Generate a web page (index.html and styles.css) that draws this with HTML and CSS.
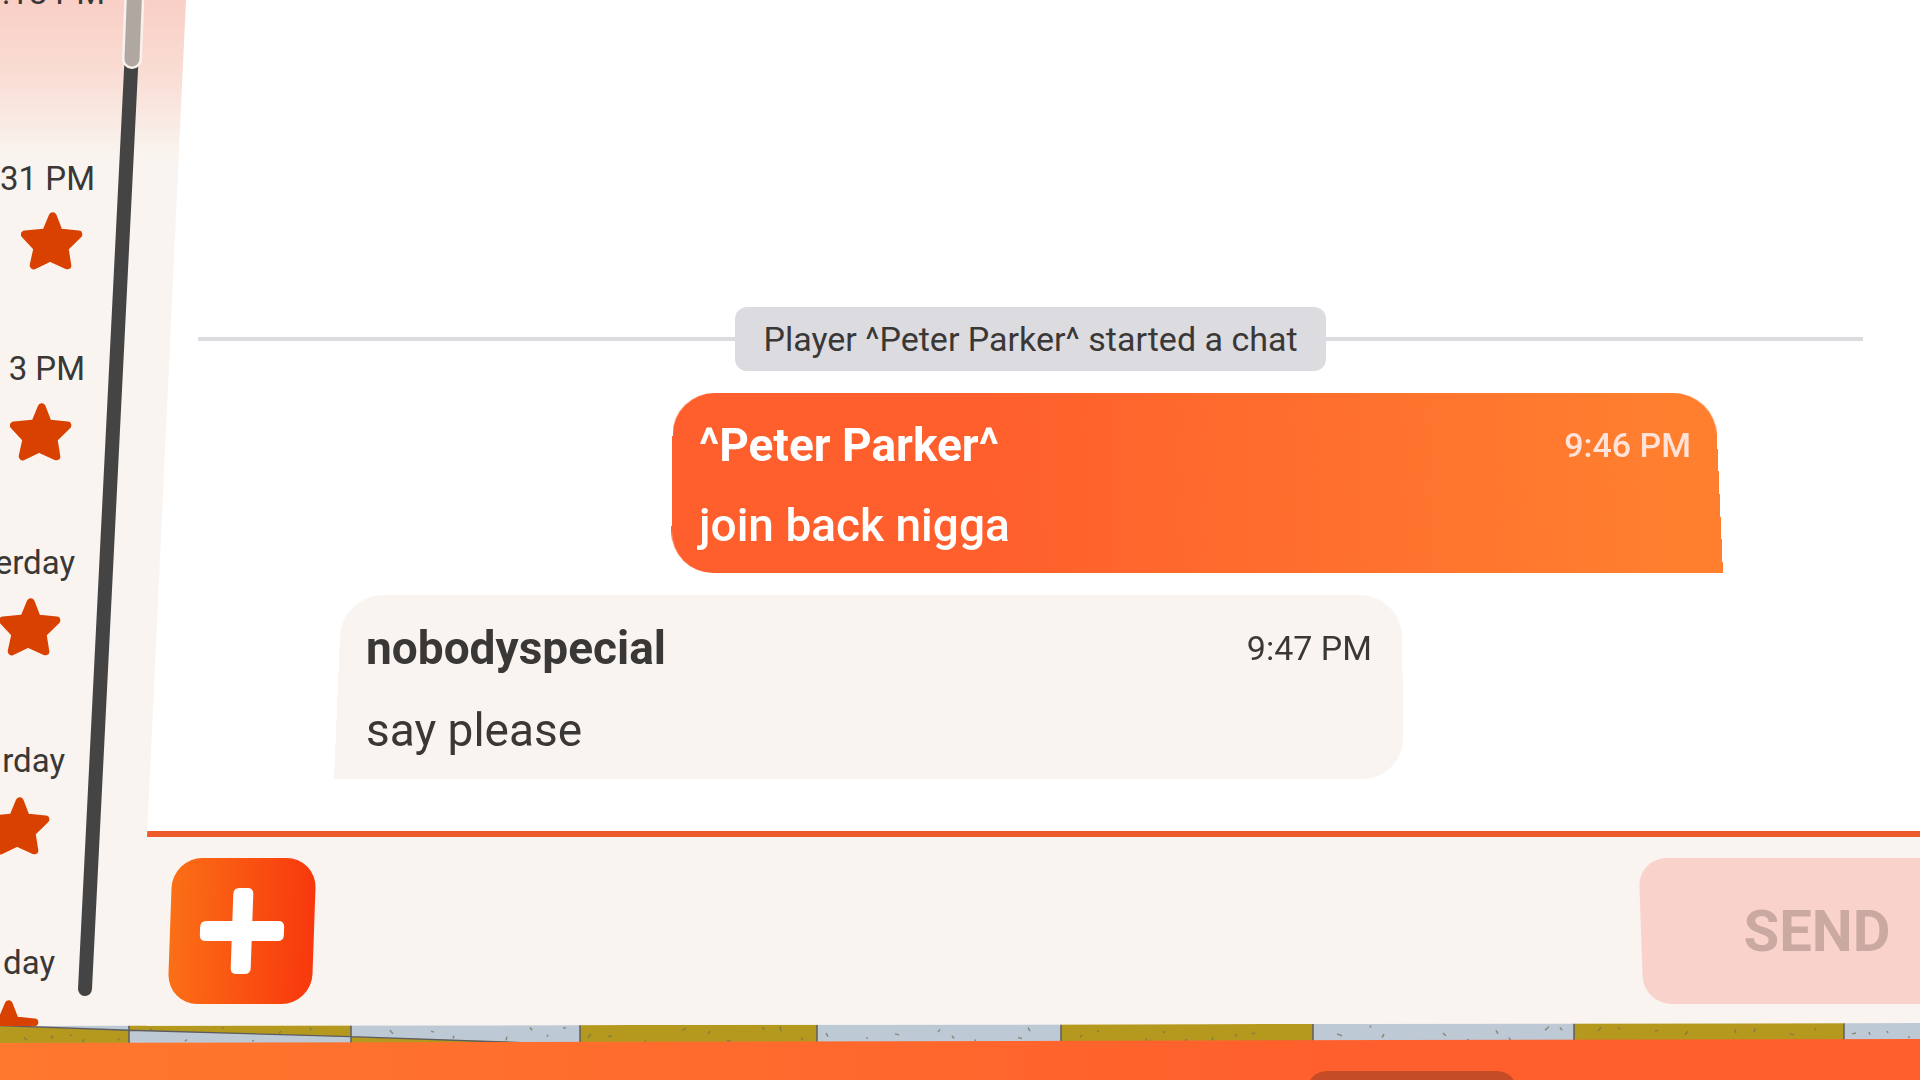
FILE: index.html
```html
<!DOCTYPE html>
<html lang="en">
<head>
    <meta charset="UTF-8">
    <meta name="viewport" content="width=device-width, initial-scale=1.0">
    <title>Chat</title>
    <link rel="stylesheet" href="styles.css">
</head>
<body>

<svg class="defs" aria-hidden="true">
    <symbol id="star" viewBox="0 0 62 58">
        <path d="M31.7 4.3 38 20.5 57.3 22.5 43.5 36 46.3 53.3 29.3 45.5 12.7 53.3 16.5 36 4 22.5 25 20.5Z" fill="#d84100" stroke="#d84100" stroke-width="8" stroke-linejoin="round"/>
    </symbol>
</svg>

<main class="window">
    <!-- chat list -->
    <aside class="sidebar">
        <ul class="chat-list">
            <li style="--i:0"><time>:18 PM</time></li>
            <li style="--i:1"><time>31 PM</time><svg class="star"><use href="#star"/></svg></li>
            <li style="--i:2"><time>3 PM</time><svg class="star"><use href="#star"/></svg></li>
            <li style="--i:3"><time>erday</time><svg class="star"><use href="#star"/></svg></li>
            <li style="--i:4"><time>rday</time><svg class="star"><use href="#star"/></svg></li>
            <li style="--i:5"><time>day</time><svg class="star"><use href="#star"/></svg></li>
        </ul>
        <svg class="scrollbar" width="150" height="1000" aria-hidden="true">
            <path d="M131.500 60 85 989" stroke="#444" stroke-width="14" stroke-linecap="round"/>
            <path d="M135 -20 132 59" stroke="#f9f1ec" stroke-width="20" stroke-linecap="round"/>
            <path d="M135 -20 132 59" stroke="#b0a7a1" stroke-width="15" stroke-linecap="round"/>
        </svg>
    </aside>

    <section class="chat">
        <div class="messages">
            <div class="divider"><span>Player ^Peter Parker^ started a chat</span></div>

            <article class="bubble mine">
                <header><h2>^Peter Parker^</h2><time>9:46 PM</time></header>
                <p>join back nigga</p>
            </article>

            <article class="bubble theirs">
                <header><h2>nobodyspecial</h2><time>9:47 PM</time></header>
                <p>say please</p>
            </article>
        </div>

        <form class="composer">
            <button type="button" class="add" aria-label="Add">
                <svg width="86" height="86" viewBox="0 0 86 86"><path d="M33 6Q33 0 39 0H47Q53 0 53 6V33H79Q85 33 85 39V47Q85 53 79 53H53V80Q53 86 47 86H39Q33 86 33 80V53H7Q1 53 1 47V39Q1 33 7 33H33Z" fill="#fff"/></svg>
            </button>
            <input type="text" name="message" aria-label="Message">
            <button type="submit" class="send" disabled>SEND</button>
        </form>
    </section>
</main>

<!-- floor tiles behind the window -->
<svg class="floor" viewBox="0 0 1920 24" preserveAspectRatio="none" aria-hidden="true">
    <rect width="1920" height="24" fill="#bec9d6"/>
    <path d="M0 4 129 9V24H0ZM129 0H351V16L129 9ZM351 16 580 24H351ZM580 0H817V24H580ZM1061 0H1313V24H1061ZM1574 0H1844V24H1574Z" fill="#b5991f"/>
    <path d="M0 4 129 9 351 16 560 24M129 0V24M351 0V24M580 0V24M817 0V24M1061 0V24M1313 0V24M1574 0V24M1844 0V24" fill="none" stroke="#5c5c60" stroke-width="1.500"/>
    <path d="M24 17l3 3M51 18l2-3M84 19l-2 3M70 14l2 1M118 20l1-2M150 7l2 2M185 21l2-2M222 6l2 1M252 21l2-1M279 12l2-2M310 6l1 3M390 9l3 4M431 10l3 1M453 18l1-3M507 16l-1 4M530 6l2 3M548 14l-1 2M563 6l3 1M588 17l3-4M608 16l4-1M645 20l1 2M682 9l4-2M708 13l2-3M727 20l4 1M762 6l3 2M780 5l1 5M801 17l2 3M826 12l2 4M866 18l2-1M895 13l4 1M938 11l2-3M952 15l2 3M975 19l1 3M1018 17l4 1M1028 6l2 4M1080 17l2-3M1097 9l2 2M1146 18l1 4M1163 12l2-2M1184 21l3-2M1212 20l1-3M1235 13l2 3M1252 13l3-1M1337 13l5 2M1370 6l1-2M1382 17l2-4M1443 12l3 3M1467 19l4 2M1496 9l2 4M1509 17l2 4M1545 9l4-4M1560 6l2 3M1598 10l3-4M1618 6l2 2M1655 10l3-1M1685 14l3-4M1697 21l3 2M1735 8l1 4M1754 11l1-4M1790 13l4 1M1815 7l1 2M1852 13l4-1M1869 11l1 3M1887 10l1 2M1908 16l2 1" fill="none" stroke="#6f7150" stroke-opacity="0.700" stroke-width="1.500"/>
</svg>

<footer class="bottom-bar">
    <button type="button" aria-label="Menu"></button>
</footer>

</body>
</html>
```
FILE: styles.css
```css
* {
    box-sizing: border-box;
}

body {
    margin: 0;
    height: 100vh;
    display: flex;
    flex-direction: column;
    overflow: hidden;
    font-family: Roboto, "Liberation Sans", sans-serif;
    color: #3a3836;
    background: #ff6a2d;
}

h2, p, ul {
    margin: 0;
    padding: 0;
}

button {
    border: none;
    font-family: inherit;
}

.defs {
    position: absolute;
    width: 0;
    height: 0;
}

.window {
    flex: 1;
    min-height: 0;
    display: flex;
    position: relative;
    z-index: 1;
    overflow: hidden;
    background: linear-gradient(#f9cfc6 0, #f9dcd3 70px, #f9f4ef 155px);
    clip-path: polygon(0 0, 100% 0, 100% calc(100% - 3px), 0 100%);
}

/* chat list, every row is a little taller and further left than the last */
.sidebar {
    width: 147px;
    flex-shrink: 0;
    position: relative;
}

.chat-list {
    list-style: none;
    margin-top: -27px;
}

.chat-list li {
    height: calc(186px + var(--i) * 4px);
    padding-right: calc(42px + var(--i) * 10px);
    display: flex;
    flex-direction: column;
    align-items: flex-end;
    gap: calc(12px + var(--i) * 1px);
}

.chat-list time {
    font-size: 33px;
    line-height: 40px;
    white-space: nowrap;
}

.star {
    width: 62px;
    height: 58px;
    margin-right: calc(11px + var(--i) * 1px);
    flex-shrink: 0;
}

.scrollbar {
    position: absolute;
    top: 0;
    left: 0;
    z-index: 1;
}

/* chat */
.chat {
    flex: 1;
    min-width: 0;
    display: flex;
    flex-direction: column;
}

.messages {
    flex: 1;
    display: flex;
    flex-direction: column;
    justify-content: flex-end;
    gap: 20px;
    padding-bottom: 52px;
    background: #fff;
    border-bottom: 6px solid #ee5b2a;
    clip-path: polygon(39px 0, 100% 0, 100% 100%, 0 100%);
}

.divider {
    display: flex;
    align-items: center;
    margin: 0 57px 0 51px;
    font-size: 34px;
    line-height: 64px;
}

.divider::before,
.divider::after {
    content: "";
    flex: 1;
    height: 4px;
    background: #dcdbe0;
}

.divider span {
    padding: 0 28px;
    border-radius: 12px;
    background: #dcdbe0;
}

.bubble {
    position: relative;
    z-index: 0;
    padding: 14px 28px 8px;
    font-size: 46px;
}

.bubble::before {
    content: "";
    position: absolute;
    inset: 0;
    z-index: -1;
    transform: perspective(1000px) rotateX(3deg);
}

.bubble header {
    display: flex;
    justify-content: space-between;
}

.bubble h2 {
    font-size: 46px;
    font-weight: bold;
}

.bubble time {
    padding-right: 4px;
    font-size: 34px;
}

.mine {
    margin: 0 197px 0 524px;
    line-height: 80px;
    font-weight: 500;
    color: #fff;
}

.mine::before {
    border-radius: 42px 42px 0 42px;
    background: linear-gradient(90deg, #ff5f2c 30%, #ff7f2f 95%);
    transform-origin: 20% 100%;
}

.mine time {
    color: #ffe3d8;
}

.theirs {
    margin: 0 516px 0 187px;
    padding-left: 32px;
    line-height: 82px;
}

.theirs::before {
    border-radius: 42px 42px 42px 0;
    background: #f9f4f0;
    transform-origin: 75% 100%;
}

/* composer */
.composer {
    display: flex;
    align-items: center;
    gap: 24px;
    padding: 21px 0 22px 23px;
    overflow: hidden;
    background: #f9f4ef;
}

.composer input {
    flex: 1;
    min-width: 0;
    height: 100px;
    border: none;
    outline: none;
    background: transparent;
    font-family: inherit;
    font-size: 46px;
}

.add {
    width: 144px;
    height: 146px;
    padding: 0;
    display: flex;
    align-items: center;
    justify-content: center;
    border-radius: 30px;
    background: linear-gradient(90deg, #fb6f16, #f8380d);
    transform: skewX(-2deg);
}

.send {
    position: relative;
    z-index: 0;
    width: 352px;
    height: 146px;
    flex-shrink: 0;
    margin-right: -73px;
    background: none;
    color: #c9a9a1;
    font-size: 58px;
    font-weight: bold;
}

.send::before {
    content: "";
    position: absolute;
    inset: 0;
    z-index: -1;
    border-radius: 28px;
    background: #f8d2cb;
    transform: skewX(2deg);
}

/* below the window */
.floor {
    width: 100%;
    height: 22px;
    margin-top: -4px;
    flex-shrink: 0;
}

.bottom-bar {
    height: 41px;
    margin-top: -5px;
    flex-shrink: 0;
    overflow: hidden;
    padding: 32px 403px 0 0;
    text-align: right;
    background: linear-gradient(90deg, #ff782e, #ff5f2c 70%);
    clip-path: polygon(0 4px, 100% 0, 100% 100%, 0 100%);
}

.bottom-bar button {
    width: 210px;
    height: 80px;
    border-radius: 20px;
    background: #c44c26;
}
```
